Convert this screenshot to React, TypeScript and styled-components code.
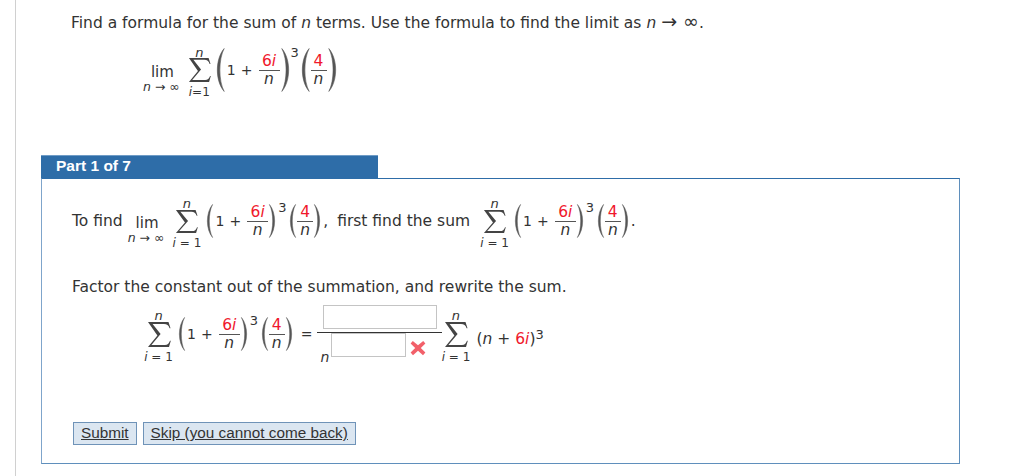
import React from "react";
import styled, { createGlobalStyle } from "styled-components";

const GlobalStyle = createGlobalStyle`
  html, body { margin: 0; padding: 0; background: #fff; }
  body { font-family: "DejaVu Sans", Verdana, sans-serif; color: #333; overflow: hidden; }
`;

const Page = styled.div`
  width: 1009px;
  height: 476px;
  box-sizing: border-box;
  overflow: hidden;
  display: flex;
  flex-direction: column;
  margin-left: 15px;
  padding: 14px 0 0 25px;
  border-left: 1px solid #d0d0d0;
`;

const Question = styled.div`
  margin-left: 30px;
  font-size: 15.5px;
  line-height: 18px;
  white-space: nowrap;
`;

const Var = styled.i`
  font-style: italic;
`;

const BigSymbol = styled.span`
  font-size: 19px;
  line-height: 0;
`;

const MainFormula = styled.div`
  display: flex;
  align-items: center;
  height: 62px;
  margin: 7px 0 0 102px;
  font-size: 14px;
`;

const PartHeader = styled.div`
  width: 337px;
  height: 24px;
  margin-top: 54px;
  box-sizing: border-box;
  padding: 1px 0 0 15px;
  background: #2e6da8;
  border-top: 1px solid #6f9cc6;
  color: #fff;
  font: bold 15.5px/18px "Liberation Sans", Arial, sans-serif;
`;

const Panel = styled.div`
  width: 919px;
  height: 286px;
  box-sizing: border-box;
  padding: 0 0 0 30px;
  border: 1px solid #2e6da8;
  border-left-color: #7fa5cb;
  border-bottom-color: #5f8fbc;
  border-right-color: #5f8fbc;
  margin-top: -1px;
  display: flex;
  flex-direction: column;
`;

const Row = styled.div<{ $top: number; $left?: number; $h?: number }>`
  display: flex;
  align-items: center;
  height: ${({ $h }) => $h ?? 70}px;
  margin-top: ${({ $top }) => $top}px;
  margin-left: ${({ $left }) => $left ?? 0}px;
  font-size: 14px;
  white-space: nowrap;
`;

const Prose = styled.span<{ $gap?: number; $size?: number; $drop?: number }>`
  font-size: ${({ $size }) => $size ?? 15.5}px;
  margin-left: ${({ $gap }) => $gap ?? 0}px;
  margin-top: ${({ $drop }) => $drop ?? 0}px;
`;

const Line = styled.div`
  font-size: 15.5px;
  line-height: 18px;
  margin-top: 22px;
`;

const LimitStack = styled.div<{ $gap?: number }>`
  display: flex;
  flex-direction: column;
  align-items: center;
  margin-left: ${({ $gap }) => $gap ?? 0}px;
  margin-top: 16px;
`;

const LimWord = styled.span`
  font-size: 15px;
  line-height: 16px;
  margin-left: 2px;
`;

const LimBelow = styled.span`
  font-size: 12.5px;
  line-height: 13px;
  white-space: nowrap;
`;

const SumStack = styled.div<{ $gap?: number; $lower: number; $w: number }>`
  display: flex;
  flex: none;
  flex-direction: column;
  align-items: center;
  width: ${({ $w }) => $w}px;
  margin-left: ${({ $gap }) => $gap ?? 0}px;
  padding-top: ${({ $lower }) => $lower - 5}px;
`;

const SumUpper = styled.span`
  font-size: 13px;
  line-height: 15px;
  margin-bottom: -2.5px;
`;

const SumLower = styled.span<{ $lower: number }>`
  font-size: 12px;
  line-height: 15px;
  margin-top: ${({ $lower }) => $lower - 7.5}px;
  white-space: nowrap;
`;

const Frac = styled.div<{ $w: number; $gap?: number }>`
  display: flex;
  flex: none;
  flex-direction: column;
  align-items: center;
  width: ${({ $w }) => $w}px;
  margin-left: ${({ $gap }) => $gap ?? 0}px;
`;

const Num = styled.span`
  width: 100%;
  text-align: center;
  color: #f0182c;
  font-size: 15.5px;
  line-height: 17px;
  border-bottom: 1px solid #555;
`;

const Den = styled.span`
  font-size: 15.5px;
  line-height: 17px;
`;

const Sup = styled.span<{ $lift: number; $gap: number }>`
  font-size: 13px;
  line-height: 14px;
  width: 8px;
  margin-bottom: ${({ $lift }) => $lift}px;
  margin-left: ${({ $gap }) => $gap}px;
  margin-right: ${({ $gap }) => $gap + 1}px;
`;

const InlineSup = styled.span`
  font-size: 13px;
  vertical-align: 5px;
`;

const One = styled.span`
  flex: none;
  width: 9px;
  margin-left: 1px;
  text-align: center;
`;

const Plus = styled.span`
  flex: none;
  margin: 0 6px 0 5px;
`;

const Red = styled.span`
  color: #f0182c;
`;

const AnswerFrac = styled.div`
  flex: none;
  width: 125px;
  margin: -6px 0 0 5px;
  display: flex;
  flex-direction: column;
`;

const AnswerTop = styled.div`
  display: flex;
  justify-content: center;
  padding-bottom: 3px;
  border-bottom: 1px solid #333;
`;

const AnswerBottom = styled.div`
  display: flex;
  align-items: flex-end;
  padding-left: 3px;
`;

const AnswerInput = styled.input<{ $w: number }>`
  flex: none;
  width: ${({ $w }) => $w}px;
  height: 24px;
  box-sizing: border-box;
  margin: 0;
  padding: 0;
  background: #fff;
  border: 1px solid #c4c4c4;
  outline: none;
`;

const DenVar = styled.span`
  font-size: 14px;
  line-height: 15px;
  width: 9px;
  margin-bottom: -8px;
  margin-right: 2px;
`;

const WrongMark = styled.svg`
  flex: none;
  width: 16px;
  height: 16px;
  margin: 0 0 1px 4px;
  display: block;
`;

const Buttons = styled.div`
  display: flex;
  gap: 6px;
  margin: 55px 0 0 1px;
`;

const ActionButton = styled.button`
  height: 23px;
  box-sizing: border-box;
  padding: 0 7px 1px;
  background: #dbe6f1;
  border: 1px solid #6f93b8;
  color: #333;
  font: 15.3px/20px "Liberation Sans", Arial, sans-serif;
  text-decoration: underline;
`;

function Paren({ h, right, gap }: { h: number; right?: boolean; gap?: number }) {
  const w = Math.round(h * 0.3);
  return (
    <svg
      width={w}
      height={h}
      viewBox="0 0 10 40"
      preserveAspectRatio="none"
      style={{ flex: "none", marginLeft: gap ?? 0, transform: right ? "scaleX(-1)" : undefined }}
    >
      <path d="M8.6 .5C1.6 10 1.6 30 8.6 39.5C4.2 30 4.2 10 8.6 .5Z" fill="#555" stroke="#555" strokeWidth=".5" />
    </svg>
  );
}

function Sigma({ w, h }: { w: number; h: number }) {
  return (
    <svg width={w} height={h} viewBox="0 0 24 26" preserveAspectRatio="none" style={{ display: "block", flex: "none" }}>
      <path
        d="M1 1H21.5L23.5 7H22.6C21.6 4 20 2.8 17 2.8H5.6L13.6 12.6L4.4 23H18C20.5 23 22 21.8 23 19H23.8L22 25H1L10.4 14L1 1Z"
        fill="#444"
      />
    </svg>
  );
}

function Sum({ text, w, sigmaW, h, lower, gap }: { text: string; w: number; sigmaW: number; h: number; lower: number; gap?: number }) {
  return (
    <SumStack $gap={gap} $lower={lower} $w={w}>
      <SumUpper><Var>n</Var></SumUpper>
      <Sigma w={sigmaW} h={h} />
      <SumLower $lower={lower}><Var>i</Var>{text}</SumLower>
    </SumStack>
  );
}

function Limit({ gap }: { gap?: number }) {
  return (
    <LimitStack $gap={gap}>
      <LimWord>lim</LimWord>
      <LimBelow><Var>n</Var> → ∞</LimBelow>
    </LimitStack>
  );
}

function Term({ h, gap, overlap = 0 }: { h: number; gap: number; overlap?: number }) {
  return (
    <>
      <Paren h={h} gap={gap} />
      <One>1</One>
      <Plus>+</Plus>
      <Frac $w={21}>
        <Num>6<Var>i</Var></Num>
        <Den><Var>n</Var></Den>
      </Frac>
      <Paren h={h} right />
      <Sup $lift={Math.round(h * 0.77)} $gap={overlap}>3</Sup>
      <Paren h={h} />
      <Frac $w={16}>
        <Num>4</Num>
        <Den><Var>n</Var></Den>
      </Frac>
      <Paren h={h} right />
    </>
  );
}

export default function App() {
  return (
    <Page>
      <GlobalStyle />
      <Question>
        Find a formula for the sum of <Var>n</Var> terms. Use the formula to find the limit as <Var>n</Var> <BigSymbol>→ ∞</BigSymbol>.
      </Question>
      <MainFormula>
        <Limit />
        <Sum text="=1" w={23} sigmaW={23} h={26} lower={9} gap={8} />
        <Term h={44} gap={2} overlap={-2} />
      </MainFormula>
      <PartHeader>Part 1 of 7</PartHeader>
      <Panel>
        <Row $top={7}>
          <Prose>To find</Prose>
          <Limit gap={5} />
          <Sum text=" = 1" w={29} sigmaW={23} h={25} lower={10} gap={8} />
          <Term h={34} gap={3} />
          <Prose>,</Prose>
          <Prose $gap={9}>first find the sum</Prose>
          <Sum text=" = 1" w={29} sigmaW={23} h={25} lower={10} gap={10} />
          <Term h={34} gap={3} />
          <Prose>.</Prose>
        </Row>
        <Line>Factor the constant out of the summation, and rewrite the sum.</Line>
        <Row $top={5} $left={72} $h={66}>
          <Sum text=" = 1" w={29} sigmaW={24} h={27} lower={10} />
          <Term h={34} gap={3} />
          <Prose $gap={6} $size={14}>=</Prose>
          <AnswerFrac>
            <AnswerTop><AnswerInput $w={114} aria-label="numerator" /></AnswerTop>
            <AnswerBottom>
              <DenVar><Var>n</Var></DenVar>
              <AnswerInput $w={75} aria-label="denominator" />
              <WrongMark viewBox="0 0 16 16">
                <path d="M2.8 1L8 5.2L13.2 1L15.4 3.6L10.8 8L15.4 12.6L13 15.2L8 10.8L3 15.2L.6 12.6L5.2 8L.6 3.6Z" fill="#f2606a" />
              </WrongMark>
            </AnswerBottom>
          </AnswerFrac>
          <Sum text=" = 1" w={29} sigmaW={24} h={27} lower={10} gap={-1} />
          <Prose $gap={6} $drop={6}>(<Var>n</Var> + <Red>6<Var>i</Var></Red>)<InlineSup>3</InlineSup></Prose>
        </Row>
        <Buttons>
          <ActionButton>Submit</ActionButton>
          <ActionButton>Skip (you cannot come back)</ActionButton>
        </Buttons>
      </Panel>
    </Page>
  );
}
